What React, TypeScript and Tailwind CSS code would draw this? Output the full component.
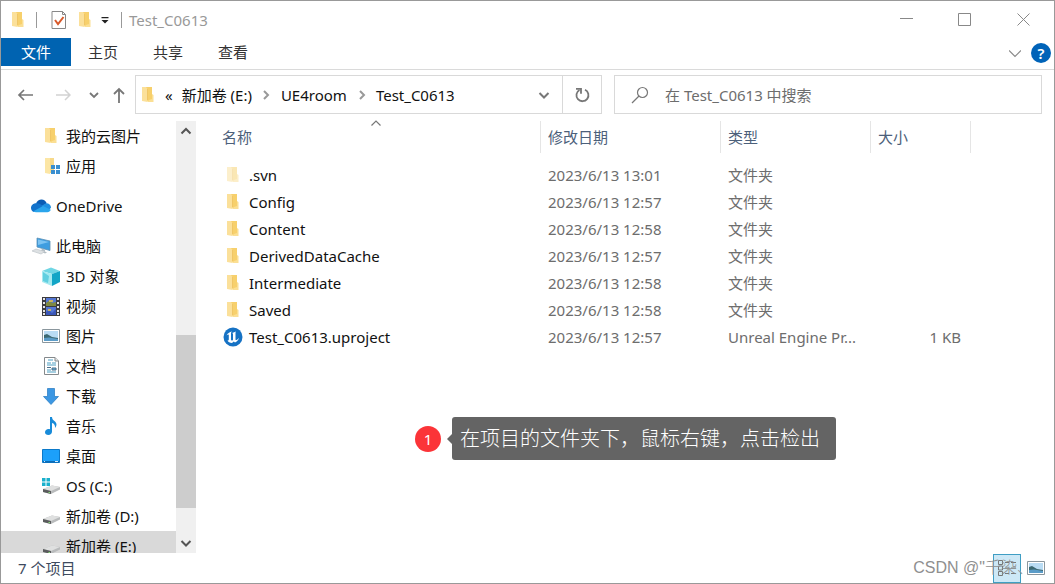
import type { ReactNode } from "react";

type FileRow = {
  name: string;
  date: string;
  type: string;
  size?: string;
  icon: "hidden" | "folder" | "unreal";
};

const files: FileRow[] = [
  { name: ".svn", date: "2023/6/13 13:01", type: "文件夹", icon: "hidden" },
  { name: "Config", date: "2023/6/13 12:57", type: "文件夹", icon: "folder" },
  { name: "Content", date: "2023/6/13 12:58", type: "文件夹", icon: "folder" },
  { name: "DerivedDataCache", date: "2023/6/13 12:57", type: "文件夹", icon: "folder" },
  { name: "Intermediate", date: "2023/6/13 12:58", type: "文件夹", icon: "folder" },
  { name: "Saved", date: "2023/6/13 12:58", type: "文件夹", icon: "folder" },
  {
    name: "Test_C0613.uproject",
    date: "2023/6/13 12:57",
    type: "Unreal Engine Pr...",
    size: "1 KB",
    icon: "unreal",
  },
];

function FolderIcon({ faded = false }: { faded?: boolean }) {
  return (
    <svg width="16" height="18" viewBox="0 0 16 18" className={faded ? "opacity-50" : ""} aria-hidden="true">
      <path d="M2 1h10v14H2z" fill="#f7d06c" />
      <path d="M2 1h4l1.500 2v13L2 15z" fill="#fbe09a" />
      <path d="M12 8l1.500 1v7H7l2-2 3-1z" fill="#fbdf94" />
      <path d="M7.500 3v11" stroke="#edc25e" strokeWidth=".8" />
    </svg>
  );
}

function AppsIcon() {
  return (
    <svg width="18" height="18" viewBox="0 0 18 18" aria-hidden="true">
      <path d="M3 1h9v15H3z" fill="#f7d98a" />
      <path d="M3 1h5v16l-5-1z" fill="#fce6a5" />
      <path d="M9 8h4v4H9zM14 8h4v4h-4zM9 13h4v4H9zM14 13h4v4h-4z" fill="#3a8fd0" />
    </svg>
  );
}

function OneDriveIcon() {
  return (
    <svg width="20" height="14" viewBox="0 0 20 14" aria-hidden="true">
      <path d="M5 4.500C6 1.800 8.200.500 10.500.500c2.300 0 4.400 1.500 5.200 3.800L11 8z" fill="#0a5cb4" />
      <path d="M5 4.300c1.500-.300 3 .1 4 .8L14 8 3 13C1.200 12.400 0 10.900 0 9c0-2.500 2.200-4.700 5-4.700z" fill="#1273cc" />
      <path d="M10.500 7l3-2c.7-.4 1.500-.7 2.500-.7 2.300.2 4 2 4 4.500L17 12z" fill="#1f8fe0" />
      <path d="M2.500 12.200L12 7l7.800 3.800c-.6 1.500-1.800 2.400-3.500 2.400H5c-1 0-1.800-.3-2.500-1z" fill="#2aa5ec" />
    </svg>
  );
}

function ComputerIcon() {
  return (
    <svg width="20" height="18" viewBox="0 0 20 18" aria-hidden="true">
      <path d="M6 1l13 3v9.500L6 10z" fill="#3e9de0" stroke="#5b8fb5" strokeWidth=".8" />
      <path d="M7 2.500l11 2.500L7 8z" fill="#7cc3f2" />
      <path d="M11 11.500l3 1v2l2 1-2 1-4-2z" fill="#b4bec4" />
      <path d="M1 14l4-2 9 2.500-4 2.500z" fill="#dde1e3" stroke="#b9c0c4" strokeWidth=".6" />
    </svg>
  );
}

function CubeIcon() {
  return (
    <svg width="18" height="19" viewBox="0 0 18 19" aria-hidden="true">
      <path d="M0 4l9-3.500L18 4l-8 3z" fill="#6fd6e4" />
      <path d="M0 4l10 3v12L0 15z" fill="#a4e9f0" />
      <path d="M10 7l8-3v11l-8 4z" fill="#12a5c6" />
      <path d="M1 5l6 4-1 7-5-2z" fill="#61cfe0" />
    </svg>
  );
}

function VideoIcon() {
  return (
    <svg width="18" height="19" viewBox="0 0 18 19" aria-hidden="true">
      <path d="M0 0h18v19H0z" fill="#3b3b3f" />
      <path d="M4 1h10v8H4zM4 10h10v8H4z" fill="#5577d4" />
      <path d="M4 6l4-3 2 3 4-1v4H4z" fill="#7f8a42" />
      <path d="M4 15l3-2 3 3 4-4v6H4z" fill="#3b57b8" />
      <path d="M7 3h4v2H7zM6 12h3v2H6z" fill="#c8b463" />
      <path
        d="M1 1h2v2H1zM1 5h2v2H1zM1 9h2v2H1zM1 13h2v2H1zM1 16h2v2H1zM15 1h2v2h-2zM15 5h2v2h-2zM15 9h2v2h-2zM15 13h2v2h-2zM15 16h2v2h-2z"
        fill="#e6e6e6"
      />
    </svg>
  );
}

function PictureIcon() {
  return (
    <svg width="18" height="14" viewBox="0 0 18 14" aria-hidden="true">
      <path d="M.5.500h17v13H.5z" fill="#fff" stroke="#8a969d" />
      <path d="M2 2h14v10H2z" fill="#b9dcf4" />
      <path d="M2 6l3-1 5 3 6 1v1H2z" fill="#3c6972" />
      <path d="M2 9l5-.5 9 1.500v2H2z" fill="#5b9cc8" />
    </svg>
  );
}

function DocumentIcon() {
  return (
    <svg width="15" height="18" viewBox="0 0 15 18" aria-hidden="true">
      <path d="M.5.500H11L14.500 4v13.500H.5z" fill="#fff" stroke="#84898c" />
      <path d="M11 .5V4h3.500" fill="#e5e5e5" stroke="#84898c" />
      <path d="M4 3h5M3 6h4M8 6h4M3 8h9M3 13h4M3 15h9" stroke="#4c9fc3" />
      <path d="M3 10.500h4M8 11h4v2H8z" stroke="#4f6f88" fill="#64b4e0" />
    </svg>
  );
}

function DownloadIcon() {
  return (
    <svg width="16" height="17" viewBox="0 0 16 17" aria-hidden="true">
      <path d="M4.500.500h7v8h4L8 16.500.5 8.500h4z" fill="#3c97e3" stroke="#2278c0" strokeWidth=".7" />
    </svg>
  );
}

function MusicIcon() {
  return (
    <svg width="12" height="18" viewBox="0 0 12 18" aria-hidden="true">
      <path d="M5 0h2c0 4 5 4 4.500 8-.1 1-.7 2-1.500 3 .3-2.800-.8-4.500-3-5v8.500C7 16.500 5.500 18 3.300 18 1.500 18 0 17 0 15.200S1.600 12 3.500 12c.6 0 1 .1 1.500.3z" fill="#188bd9" />
    </svg>
  );
}

function DesktopIcon() {
  return (
    <svg width="18" height="14" viewBox="0 0 18 14" aria-hidden="true">
      <path d="M.5.500h17v13H.5z" fill="#1ca0fa" stroke="#0b79c9" />
      <path d="M1 12h16v1.500H1z" fill="#0d6bb4" />
      <path d="M2 12.500h1M13 12.500h3" stroke="#cfeaff" />
    </svg>
  );
}

function DriveIcon({ system = false }: { system?: boolean }) {
  return (
    <svg width="20" height="18" viewBox="0 0 20 18" aria-hidden="true">
      <path d="M2 12l9-3.500 8 1.500v2.500L10 17l-8-2z" fill="#b9bbbc" />
      <path d="M2 12l9-3.500 8 1.500-9 4z" fill="#dfe0e0" />
      <path d="M2 12l8 2v3l-8-2z" fill="#5a5c5d" />
      <path d="M7.500 15H9v1H7.500z" fill="#8be07d" />
      {system && <path d="M1 1h3.500v3.500H1zM5.500 1H9v3.500H5.500zM1 5.500h3.500V9H1zM5.500 5.500H9V9H5.500z" fill="#1bb0cc" />}
    </svg>
  );
}

function UnrealIcon() {
  return (
    <svg width="20" height="20" viewBox="0 0 20 20" aria-hidden="true">
      <circle cx="10" cy="10" r="9.500" fill="#1672c4" />
      <path
        d="M3.500 8.500C4.500 6.500 6.500 5 9 4.500 8.300 5 8 5.600 8 6.500v6c0 .8.500 1.200 1.200 1 .5-.1.800-.4.800-.8V7c0-.5-.3-.8-.8-1L13 4.500c-.4.500-.5 1-.5 1.500v6.500c0 .4.300.6.600.6.700 0 1.700-.8 2.900-2.100-.6 2-2.100 3.700-4 4.400l-1.200-1L9 16c-2-.1-4-1.200-4.500-2.500.8.200 1.300-.1 1.300-.9V8.200C5.800 7 4.500 7.500 3.500 8.500z"
        fill="#fff"
      />
    </svg>
  );
}

function Chevron({ className, d, thick = false }: { className?: string; d: string; thick?: boolean }) {
  return (
    <svg width="12" height="12" viewBox="0 0 12 12" fill="none" stroke="currentColor" strokeWidth={thick ? 2 : 1.2} className={className} aria-hidden="true">
      <path d={d} />
    </svg>
  );
}

const DOWN = "M1.500 4L6 8.500 10.500 4";
const WIDE_DOWN = "M0 3.500l6 6 6-6";
const UP = "M1.500 8.500L6 4l4.500 4.500";
const RIGHT = "M4 2l4 4-4 4";

function NavItem({
  icon,
  label,
  root = false,
  selected = false,
}: {
  icon: ReactNode;
  label: string;
  root?: boolean;
  selected?: boolean;
}) {
  return (
    <li>
      <a
        href="#"
        className={[
          "flex h-[30px] items-center gap-1 whitespace-nowrap",
          root ? "pl-[29px]" : "pl-[39px]",
          selected ? "bg-[#d9d9d9]" : "",
        ].join(" ")}
      >
        <span className="flex w-[22px] shrink-0 justify-center">{icon}</span>
        {label}
      </a>
    </li>
  );
}

function TitleBar() {
  return (
    <header className="flex h-[37px] shrink-0 items-center pl-[9px] text-[#999]">
      <FolderIcon />
      <span className="ml-2.5 h-4 w-px bg-[#999]" />
      <button type="button" aria-label="属性" className="ml-3.5">
        <svg width="16" height="18" viewBox="0 0 16 18" fill="none">
          <path d="M1 .5h10.500l3 3v14H1z" fill="#fff" stroke="#888" />
          <path d="M11.500.500v3h3" stroke="#888" />
          <path d="M4 9l3 4 5.500-7" stroke="#d8592a" strokeWidth="2" />
        </svg>
      </button>
      <button type="button" aria-label="新建文件夹" className="ml-2.5">
        <FolderIcon />
      </button>
      <button type="button" aria-label="自定义快速访问工具栏" className="ml-2">
        <svg width="8" height="8" viewBox="0 0 8 8" fill="#222">
          <path d="M.5 1h7v1.200h-7zM.5 4h7L4 7.500z" />
        </svg>
      </button>
      <span className="ml-3 h-4 w-px bg-[#999]" />
      <h1 className="ml-[7px]">Test_C0613</h1>
      <div className="ml-auto flex">
        <button type="button" aria-label="最小化" className="flex h-9 w-[58px] items-center justify-center">
          <svg width="13" height="13" viewBox="0 0 13 13" stroke="#888"><path d="M0 5.500h13" /></svg>
        </button>
        <button type="button" aria-label="最大化" className="flex h-9 w-[58px] items-center justify-center">
          <svg width="13" height="13" viewBox="0 0 13 13" fill="none" stroke="#888"><path d="M.5.500h12v12H.5z" /></svg>
        </button>
        <button type="button" aria-label="关闭" className="flex h-9 w-[61px] items-center justify-center">
          <svg width="13" height="13" viewBox="0 0 13 13" fill="none" stroke="#888"><path d="M.5.500l12 12M12.500.500l-12 12" /></svg>
        </button>
      </div>
    </header>
  );
}

function Ribbon() {
  return (
    <nav className="flex h-8 shrink-0 items-start border-b border-[#dadada] text-[#333]">
      <button type="button" className="h-7 w-[70px] bg-[#0063b1] text-white">文件</button>
      <button type="button" className="h-7 w-16">主页</button>
      <button type="button" className="h-7 w-[66px]">共享</button>
      <button type="button" className="h-7 w-16">查看</button>
      <div className="ml-auto flex h-[30px] items-center gap-2.5 pr-[3px]">
        <button type="button" aria-label="展开功能区">
          <Chevron d={WIDE_DOWN} className="text-[#888]" />
        </button>
        <button type="button" aria-label="帮助" className="flex size-5 items-center justify-center rounded-full bg-[#0063b8] font-semibold text-white">
          ?
        </button>
      </div>
    </nav>
  );
}

function AddressRow() {
  return (
    <div className="flex shrink-0 items-center py-[5px] pr-3 pl-4">
      <button type="button" aria-label="后退" className="text-[#777]">
        <svg width="16" height="14" viewBox="0 0 16 14" fill="none" stroke="currentColor" strokeWidth="1.700"><path d="M7 2L2 7l5 5M2 7h14" /></svg>
      </button>
      <button type="button" aria-label="前进" className="ml-[22px] text-[#d2d2d2]">
        <svg width="16" height="14" viewBox="0 0 16 14" fill="none" stroke="currentColor" strokeWidth="1.500"><path d="M10 2l5 5-5 5M1 7h14" /></svg>
      </button>
      <button type="button" aria-label="最近位置" className="ml-[18px] text-[#777]">
        <svg width="10" height="10" viewBox="0 0 10 10" fill="none" stroke="currentColor" strokeWidth="1.800"><path d="M1 3l4 4 4-4" /></svg>
      </button>
      <button type="button" aria-label="上移" className="ml-[13px] text-[#777]">
        <svg width="14" height="16" viewBox="0 0 14 16" fill="none" stroke="currentColor" strokeWidth="1.800"><path d="M2 7l5-5 5 5M7 2v14" /></svg>
      </button>

      <div className="ml-[9px] flex h-[39px] w-[467px] shrink-0 items-center border border-[#d9d9d9] pl-1">
        <FolderIcon />
        <span className="ml-[9px]">«</span>
        <a href="#" className="ml-[9px]">新加卷 (E:)</a>
        <Chevron d={RIGHT} thick className="ml-2 text-[#999]" />
        <a href="#" className="ml-[9px]">UE4room</a>
        <Chevron d={RIGHT} thick className="ml-[9px] text-[#999]" />
        <a href="#" className="ml-2">Test_C0613</a>
        <button type="button" aria-label="以前的位置" className="ml-auto px-3 text-[#777]">
          <Chevron d={DOWN} thick />
        </button>
        <button type="button" aria-label="刷新" className="flex h-full w-[39px] items-center justify-center border-l border-[#d9d9d9] text-[#777]">
          <svg width="15" height="16" viewBox="0 0 15 16" fill="none" stroke="currentColor" strokeWidth="1.800">
            <path d="M10 2.800A6 6 0 1 1 4.500 3" />
            <path d="M1 1.800h5v5" />
          </svg>
        </button>
      </div>

      <label className="ml-3 flex h-[39px] min-w-0 flex-1 items-center border border-[#d9d9d9] pl-4">
        <svg width="18" height="18" viewBox="0 0 18 18" fill="none" stroke="#777" strokeWidth="1.200" aria-hidden="true">
          <circle cx="11.500" cy="6.500" r="5" />
          <path d="M8 10l-7 7" />
        </svg>
        <input
          type="search"
          aria-label="搜索"
          placeholder="在 Test_C0613 中搜索"
          className="ml-4 min-w-0 flex-1 outline-none placeholder:text-[#6d6d6d]"
        />
      </label>
    </div>
  );
}

function Sidebar() {
  return (
    <aside className="flex w-[195px] shrink-0">
      <ul className="min-w-0 flex-1 overflow-hidden">
        <NavItem icon={<FolderIcon />} label="我的云图片" />
        <NavItem icon={<AppsIcon />} label="应用" />
        <li className="h-2.5" />
        <NavItem root icon={<OneDriveIcon />} label="OneDrive" />
        <li className="h-2.5" />
        <NavItem root icon={<ComputerIcon />} label="此电脑" />
        <NavItem icon={<CubeIcon />} label="3D 对象" />
        <NavItem icon={<VideoIcon />} label="视频" />
        <NavItem icon={<PictureIcon />} label="图片" />
        <NavItem icon={<DocumentIcon />} label="文档" />
        <NavItem icon={<DownloadIcon />} label="下载" />
        <NavItem icon={<MusicIcon />} label="音乐" />
        <NavItem icon={<DesktopIcon />} label="桌面" />
        <NavItem icon={<DriveIcon system />} label="OS (C:)" />
        <NavItem icon={<DriveIcon />} label="新加卷 (D:)" />
        <NavItem selected icon={<DriveIcon />} label="新加卷 (E:)" />
      </ul>
      <div className="flex w-5 shrink-0 flex-col items-center bg-[#f0f0f0] text-[#555]">
        <button type="button" aria-label="向上滚动" className="flex h-5 w-full items-center justify-center">
          <Chevron d={UP} thick />
        </button>
        <div className="flex-[194]" />
        <div className="w-full flex-[173] bg-[#cdcdcd]" />
        <div className="flex-[25]" />
        <button type="button" aria-label="向下滚动" className="flex h-5 w-full items-center justify-center">
          <Chevron d={DOWN} thick />
        </button>
      </div>
    </aside>
  );
}

function FileTable() {
  return (
    <table className="w-full table-fixed border-separate border-spacing-0 text-left">
      <colgroup>
        <col className="w-[345px]" />
        <col className="w-[180px]" />
        <col className="w-[150px]" />
        <col className="w-[100px]" />
        <col />
      </colgroup>
      <thead className="text-[#4c607a]">
        <tr className="h-8">
          <th className="relative border-r border-[#e5e5e5] pl-[26px] font-normal">
            名称
            <Chevron d={UP} className="absolute inset-x-0 -top-1 mx-auto translate-x-2 text-[#777]" />
          </th>
          <th className="border-r border-[#e5e5e5] pl-[7px] font-normal">修改日期</th>
          <th className="border-r border-[#e5e5e5] pl-[7px] font-normal">类型</th>
          <th className="border-r border-[#e5e5e5] pl-[7px] font-normal">大小</th>
          <th />
        </tr>
      </thead>
      <tbody className="text-[#6d6d6d]">
        <tr className="h-2">
          <td colSpan={5} />
        </tr>
        {files.map((file) => (
          <tr key={file.name} className="h-[27px]">
            <td className="pl-[27px] text-[#111]">
              <a href="#" className="flex items-center gap-1.5">
                <span className="flex w-5 justify-center">
                  {file.icon === "unreal" ? <UnrealIcon /> : <FolderIcon faded={file.icon === "hidden"} />}
                </span>
                {file.name}
              </a>
            </td>
            <td className="pl-[7px]">{file.date}</td>
            <td className="pl-[7px] whitespace-nowrap">{file.type}</td>
            <td className="pr-2.5 text-right">{file.size}</td>
            <td />
          </tr>
        ))}
      </tbody>
    </table>
  );
}

function Callout() {
  return (
    <div className="absolute top-[296px] left-[219px] flex items-center">
      <span className="flex size-[26px] items-center justify-center rounded-full bg-[#fb3438] text-white">1</span>
      <span className="ml-1.5 border-y-[5px] border-r-[5px] border-y-transparent border-r-[#646464]" />
      <p className="rounded-[3px] bg-[#646464] py-[7px] pr-4 pl-2 text-[20px] leading-[29px] font-light whitespace-nowrap text-white">
        在项目的文件夹下，鼠标右键，点击检出
      </p>
    </div>
  );
}

function StatusBar() {
  return (
    <footer className="flex h-[30px] shrink-0 items-center pr-[9px] pl-[17px] text-[#3d4a5e]">
      <span>7 个项目</span>
      <div className="relative ml-auto flex items-center gap-1.5">
        <button type="button" aria-label="详细信息" className="flex h-[29px] w-7 items-center justify-center border border-[#3f9ec4] bg-[#cde8f6]">
          <svg width="18" height="16" viewBox="0 0 18 16" fill="none" stroke="#777">
            <path d="M.5.500h4v4h-4zM.5 6h4v4h-4zM.5 11.500h4v4h-4zM7 2.500h4M13 2.500h5M7 8h4M13 8h5M7 13.500h4M13 13.500h5" />
          </svg>
        </button>
        <button type="button" aria-label="大缩略图">
          <PictureIcon />
        </button>
        <span className="pointer-events-none absolute right-3 font-['Liberation_Sans','Noto_Sans_CJK_SC',sans-serif] text-[16px] font-light whitespace-nowrap text-[#8f8f8f]">
          CSDN @"千染、
        </span>
      </div>
    </footer>
  );
}

export default function App() {
  return (
    <div className="flex h-screen flex-col overflow-hidden border border-[#999] bg-white font-['Noto_Sans','Noto_Sans_CJK_SC',sans-serif] text-[15px] leading-5 text-[#111]">
      <TitleBar />
      <Ribbon />
      <AddressRow />
      <main className="mt-0.5 flex min-h-0 flex-1">
        <Sidebar />
        <section className="relative min-w-0 flex-1">
          <FileTable />
          <Callout />
        </section>
      </main>
      <StatusBar />
    </div>
  );
}
